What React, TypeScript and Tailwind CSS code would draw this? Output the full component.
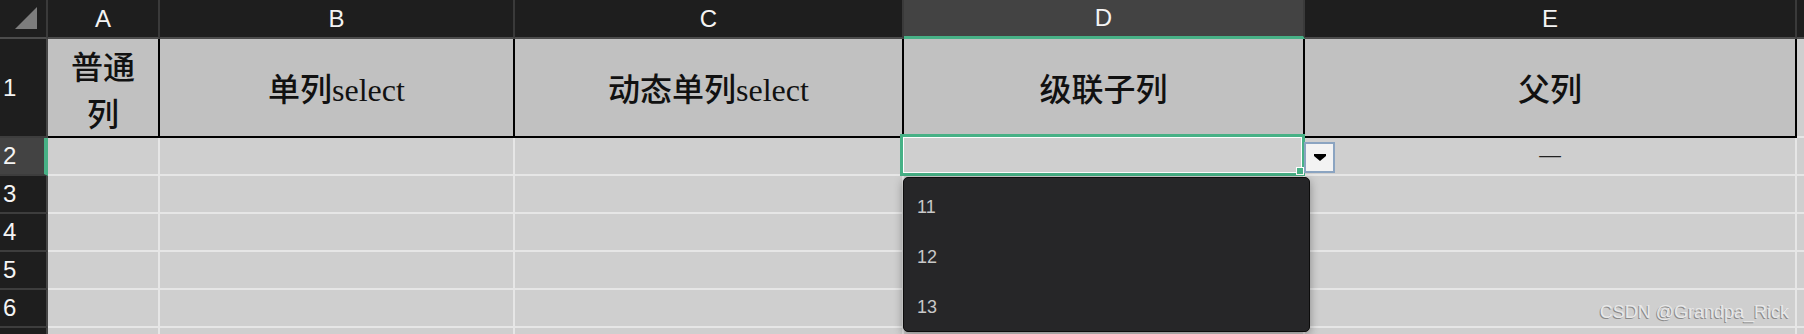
import React from 'react';

type Col = { label: string; w: string; title?: React.ReactNode };

const COLS: Col[] = [
  {
    label: 'A',
    w: 'w-[112px]',
    title: (
      <div className="flex flex-col items-center leading-[47px] pt-[4px]">
        <span>普通</span>
        <span>列</span>
      </div>
    ),
  },
  { label: 'B', w: 'w-[355px]', title: <span>单列select</span> },
  { label: 'C', w: 'w-[389px]', title: <span>动态单列select</span> },
  { label: 'D', w: 'w-[401px]', title: <span>级联子列</span> },
  { label: 'E', w: 'w-[492px]', title: <span>父列</span> },
  { label: '', w: 'w-[60px]' },
];

const sans = "font-['Liberation_Sans','Noto_Sans_CJK_SC',sans-serif]";
const titleFont = "font-['Liberation_Serif','Noto_Sans_CJK_SC',serif]";

function HeaderRow() {
  return (
    <div className="flex h-[39px]">
      <div className="w-[48px] shrink-0 h-full bg-[#1e1e1e] border-r-2 border-r-[#3a3a3a] border-b-2 border-b-[#4c4c4c] flex items-end justify-end pr-[9px] pb-[8px]">
        <svg width="22" height="22" viewBox="0 0 22 22">
          <polygon points="0,22 22,22 22,0" fill="#7d7d7d" />
        </svg>
      </div>
      {COLS.map((c) => {
        const active = c.label === 'D';
        return (
          <div
            key={c.label || 'F'}
            className={
              c.w +
              ' shrink-0 h-full flex items-center justify-center text-[24px] text-[#f4f4f4] border-r-2 border-r-[#3a3a3a] ' +
              sans +
              (active
                ? ' bg-[#434343] border-b-[3px] border-b-[#47b186]'
                : ' bg-[#1e1e1e] border-b-2 border-b-[#4c4c4c]')
            }
          >
            {c.label}
          </div>
        );
      })}
    </div>
  );
}

function RowHead({ n, active, hideLabel }: { n: number; active?: boolean; hideLabel?: boolean }) {
  return (
    <div
      className={
        'w-[48px] shrink-0 h-full flex items-center pl-[3px] text-[24px] text-[#f4f4f4] border-b-2 border-b-[#3d3d3d] ' +
        sans +
        (active
          ? ' bg-[#434343] border-r-4 border-r-[#47b186]'
          : ' bg-[#1e1e1e] border-r-2 border-r-[#464646]')
      }
    >
      {hideLabel ? null : n}
    </div>
  );
}

function TitleRow() {
  return (
    <div className="flex h-[99px]">
      <RowHead n={1} />
      {COLS.map((c) =>
        c.title ? (
          <div
            key={c.label}
            className={
              c.w +
              ' shrink-0 h-full bg-[#c1c1c1] border-r-2 border-b-2 border-black flex items-center justify-center text-[32px] font-medium text-[#111] pt-[5px] ' +
              titleFont
            }
          >
            {c.title}
          </div>
        ) : (
          <div key="F" className={c.w + ' shrink-0 h-full bg-[#cfcfcf] border-b-2 border-b-[#e6e6e6]'} />
        )
      )}
    </div>
  );
}

function Dropdown() {
  return (
    <>
      {/* selection frame */}
      <div className="absolute left-[-4px] top-[-4px] w-[405px] h-[42px] border-[3px] border-[#47b186] z-10 pointer-events-none">
        <div className="w-full h-full border border-white" />
        <div className="absolute right-[-2px] bottom-[-2px] w-[8px] h-[8px] bg-[#47b186] border border-white" />
      </div>
      {/* dropdown arrow button */}
      <div className="absolute left-[400px] top-[4px] w-[31px] h-[31px] bg-[#f3f3f3] border-2 border-[#8ba4c1] flex items-center justify-center z-20">
        <svg width="12" height="8" viewBox="0 0 12 8">
          <polygon points="0,0 12,0 12,2 6,7 0,2" fill="#000" />
        </svg>
      </div>
      {/* menu */}
      <div
        className={
          'absolute left-[-1px] top-[39px] w-[407px] h-[155px] bg-[#262628] border border-[#0c0c0c] rounded-[5px] shadow-[0_3px_10px_rgba(0,0,0,0.35)] z-20 pt-[4px] text-[18px] text-[#c8c8c8] ' +
          sans
        }
      >
        {['11', '12', '13'].map((t) => (
          <div key={t} className="h-[50px] flex items-center pl-[13px]">
            {t}
          </div>
        ))}
      </div>
    </>
  );
}

function DataRow({ n }: { n: number }) {
  return (
    <div className="flex h-[38px] shrink-0">
      <RowHead n={n} active={n === 2} hideLabel={n === 7} />
      {COLS.map((c) => (
        <div
          key={c.label || 'F'}
          className={
            c.w +
            ' shrink-0 h-full bg-[#cfcfcf] border-r-2 border-b-2 border-[#e6e6e6]' +
            (n === 2 && c.label === 'D' ? ' relative' : '') +
            (n === 2 && c.label === 'E' ? ' flex items-center justify-center' : '')
          }
        >
          {n === 2 && c.label === 'D' ? <Dropdown /> : null}
          {n === 2 && c.label === 'E' ? (
            <span className="text-[24px] text-[#222] font-['Noto_Sans_CJK_SC',sans-serif] font-light">一</span>
          ) : null}
        </div>
      ))}
    </div>
  );
}

export default function App() {
  return (
    <div className="relative w-[1804px] h-[334px] overflow-hidden bg-[#cfcfcf]">
      <div className="flex flex-col">
        <HeaderRow />
        <TitleRow />
        {[2, 3, 4, 5, 6, 7].map((n) => (
          <DataRow key={n} n={n} />
        ))}
      </div>
      <div
        className={
          'absolute right-[15px] bottom-[8px] text-[18px] text-[#e8e8e8] [text-shadow:-1px_1px_0_#8a8a8a] z-30 ' +
          sans
        }
      >
        CSDN @Grandpa_Rick
      </div>
    </div>
  );
}
